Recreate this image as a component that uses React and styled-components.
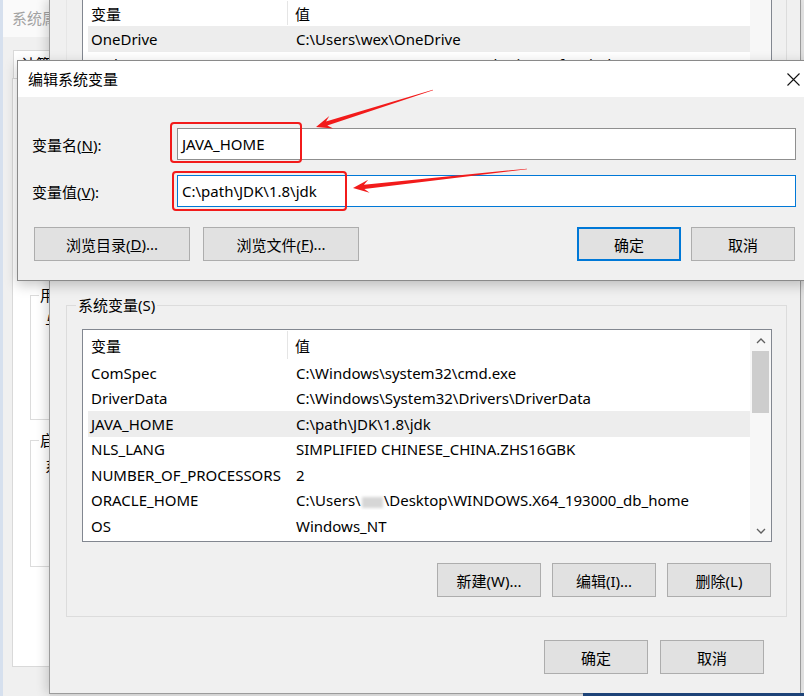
import React from "react";
import styled, { createGlobalStyle } from "styled-components";

const GlobalStyle = createGlobalStyle`
  html, body { margin: 0; padding: 0; }
  body {
    font-family: "Noto Sans", "Noto Sans CJK SC", sans-serif;
    font-size: 15px;
    color: #000;
  }
  * { box-sizing: border-box; }
`;

const userVars = [
  { name: "OneDrive", value: "C:\\Users\\wex\\OneDrive", selected: true },
  { name: "Path", value: "C:\\Users\\wex\\AppData\\Local\\Microsoft\\WindowsApps;" },
  { name: "TEMP", value: "C:\\Users\\wex\\AppData\\Local\\Temp" },
  { name: "TMP", value: "C:\\Users\\wex\\AppData\\Local\\Temp" },
];

const sysVars = [
  { name: "ComSpec", value: "C:\\Windows\\system32\\cmd.exe" },
  { name: "DriverData", value: "C:\\Windows\\System32\\Drivers\\DriverData" },
  { name: "JAVA_HOME", value: "C:\\path\\JDK\\1.8\\jdk", selected: true },
  { name: "NLS_LANG", value: "SIMPLIFIED CHINESE_CHINA.ZHS16GBK" },
  { name: "NUMBER_OF_PROCESSORS", value: "2" },
  { name: "ORACLE_HOME", value: ["C:\\Users\\", "\\Desktop\\WINDOWS.X64_193000_db_home"] },
  { name: "OS", value: "Windows_NT" },
];

// tapered annotation arrow, tail -> tip
const arrowPoints = (tx, ty, px, py) => {
  const dx = px - tx;
  const dy = py - ty;
  const len = Math.hypot(dx, dy);
  const ux = dx / len;
  const uy = dy / len;
  const nx = -uy;
  const ny = ux;
  const head = 16;
  const wing = 6.5;
  const neck = 2.1;
  const tail = 0.3;
  const hx = px - ux * head;
  const hy = py - uy * head;
  const bx = px - ux * head * 0.7;
  const by = py - uy * head * 0.7;
  return [
    [tx + nx * tail, ty + ny * tail],
    [bx + nx * neck, by + ny * neck],
    [hx + nx * wing, hy + ny * wing],
    [px, py],
    [hx - nx * wing, hy - ny * wing],
    [bx - nx * neck, by - ny * neck],
    [tx - nx * tail, ty - ny * tail],
  ]
    .map((p) => p.map((v) => v.toFixed(1)).join(","))
    .join(" ");
};

const Chevron = ({ up }) => (
  <svg width="10" height="6" viewBox="0 0 10 6">
    <path
      d={up ? "M1 5 L5 1 L9 5" : "M1 1 L5 5 L9 1"}
      fill="none"
      stroke="#606060"
      strokeWidth="1.3"
    />
  </svg>
);

const VarList = ({ rows, cut, height }) => (
  <ListBox $cut={cut} $height={height}>
    <ListContent>
      <ListHeader $cut={cut}>
        <HeaderCell $first>变量</HeaderCell>
        <HeaderCell>值</HeaderCell>
      </ListHeader>
      {rows.map((r) => (
        <Row key={r.name} $selected={r.selected}>
          <NameCell>{r.name}</NameCell>
          <ValueCell>
            {Array.isArray(r.value) ? (
              <>
                {r.value[0]}
                <Masked />
                {r.value[1]}
              </>
            ) : (
              r.value
            )}
          </ValueCell>
        </Row>
      ))}
    </ListContent>
    <ScrollBar>
      {!cut && (
        <ScrollArrow>
          <Chevron up />
        </ScrollArrow>
      )}
      {!cut && <ScrollThumb />}
      <ScrollTrack />
      {!cut && (
        <ScrollArrow>
          <Chevron />
        </ScrollArrow>
      )}
    </ScrollBar>
  </ListBox>
);

const App = () => {
  return (
    <>
      <GlobalStyle />
      <Desktop>
        {/* only the left sliver of the 系统属性 window shows */}
        <BackWindow>
          <BackTitle>系统属</BackTitle>
          <BackTabs>
            <BackTab>计算</BackTab>
          </BackTabs>
          <BackPanel>
            <BackGroup $height={180} />
            <BackGroup $height={135} $gap={15}>
              <BackLegend>用户</BackLegend>
              <BackText>与登</BackText>
            </BackGroup>
            <BackGroup $height={137} $gap={10}>
              <BackLegend>启动</BackLegend>
              <BackText>系统</BackText>
            </BackGroup>
          </BackPanel>
        </BackWindow>

        <EnvWindow>
          <UserGroup>
            <VarList rows={userVars} cut height={262} />
          </UserGroup>
          <SysGroup>
            <GroupLegend>系统变量(S)</GroupLegend>
            <VarList rows={sysVars} height={213} />
            <ButtonRow>
              <Button>新建(W)...</Button>
              <Button>编辑(I)...</Button>
              <Button>删除(L)</Button>
            </ButtonRow>
          </SysGroup>
          <FooterRow>
            <Button>确定</Button>
            <Button>取消</Button>
          </FooterRow>
        </EnvWindow>

        <Dialog>
          <TitleBar>
            <Title>编辑系统变量</Title>
            <CloseButton>
              <svg width="13" height="13" viewBox="0 0 13 13">
                <path d="M0.5 0.5 L12.5 12.5 M12.5 0.5 L0.5 12.5" stroke="#111" strokeWidth="1.1" />
              </svg>
            </CloseButton>
          </TitleBar>
          <DialogBody>
            <FieldGrid>
              <FieldLabel>
                变量名(<u>N</u>):
              </FieldLabel>
              <TextInput>JAVA_HOME</TextInput>
              <FieldLabel>
                变量值(<u>V</u>):
              </FieldLabel>
              <TextInput $focused>C:\path\JDK\1.8\jdk</TextInput>
            </FieldGrid>
            <DialogActions>
              <ButtonGroup $gap={13}>
                <Button $wide>
                  浏览目录(<u>D</u>)...
                </Button>
                <Button $wide>
                  浏览文件(<u>F</u>)...
                </Button>
              </ButtonGroup>
              <ButtonGroup $gap={10}>
                <Button $default>确定</Button>
                <Button>取消</Button>
              </ButtonGroup>
            </DialogActions>
          </DialogBody>
        </Dialog>

        <TaskStrip />

        <Annotations viewBox="0 0 804 696">
          <rect x="171" y="123" width="130" height="39" rx="3" fill="none" stroke="#f21b1b" strokeWidth="2" />
          <rect x="173" y="172" width="173" height="38" rx="3" fill="none" stroke="#f21b1b" strokeWidth="2" />
          <polygon points={arrowPoints(433, 90, 316, 127)} fill="#f21b1b" />
          <polygon points={arrowPoints(527, 169, 353, 188)} fill="#f21b1b" />
        </Annotations>
      </Desktop>
    </>
  );
};

const Desktop = styled.div`
  position: relative;
  width: 804px;
  height: 696px;
  overflow: hidden;
  background: #e6e6e6;
`;

/* ---------- back window (系统属性) ---------- */

const BackWindow = styled.div`
  position: absolute;
  left: 0;
  top: 0;
  width: 50px;
  height: 696px;
  overflow: hidden;
  background: #f0f0f0;
  border-left: 3px solid #d6e0ee;
  display: flex;
  flex-direction: column;
`;

const BackTitle = styled.div`
  height: 37px;
  background: #fafafa;
  color: #a3a3a3;
  font-size: 15px;
  line-height: 37px;
  padding-left: 9px;
  white-space: nowrap;
  overflow: hidden;
`;

const BackTabs = styled.div`
  display: flex;
  padding: 13px 0 0 10px;
`;

const BackTab = styled.div`
  flex: 1;
  height: 28px;
  padding: 2px 0 0 7px;
  border: 1px solid #d9d9d9;
  border-bottom: none;
  border-right: none;
  background: #fff;
  font-size: 15px;
  white-space: nowrap;
  overflow: hidden;
`;

const BackPanel = styled.div`
  margin-left: 9px;
  height: 589px;
  background: #fff;
  border: 1px solid #d9d9d9;
  border-right: none;
  padding: 11px 0 0 17px;
`;

const BackGroup = styled.fieldset`
  margin: ${(p) => p.$gap || 0}px 0 0;
  min-width: 0;
  height: ${(p) => p.$height}px;
  padding: 6px 0 0 14px;
  border: 1px solid #dcdcdc;
  border-right: none;
`;

const BackLegend = styled.legend`
  margin-left: -6px;
  padding: 0 1px;
  font-size: 15px;
  line-height: 20px;
  white-space: nowrap;
`;

const BackText = styled.div`
  font-size: 15px;
  line-height: 20px;
  white-space: nowrap;
  overflow: hidden;
`;

/* ---------- environment variables window ---------- */

const EnvWindow = styled.div`
  position: absolute;
  left: 49px;
  top: 0;
  width: 752px;
  height: 694px;
  background: #f0f0f0;
  border: 1px solid #9b9b9b;
  border-top: none;
  box-shadow: -3px 0 10px rgba(0, 0, 0, 0.16);
  padding: 0 13px 0 16px;
  display: flex;
  flex-direction: column;
`;

const UserGroup = styled.div`
  height: 281px;
  padding: 0 14px 0 15px;
  border-right: 1px solid #dcdcdc;
  border-left: 1px solid #e6e6e6;
`;

const SysGroup = styled.fieldset`
  margin: 14px 0 0;
  padding: 14px 14px 19px 15px;
  border: 1px solid #dcdcdc;
  min-width: 0;
`;

const GroupLegend = styled.legend`
  margin-left: -6px;
  padding: 0 2px;
  font-size: 15px;
  line-height: 20px;
`;

const ListBox = styled.div`
  height: ${(p) => p.$height}px;
  background: #fff;
  border: 1px solid #828790;
  border-top: ${(p) => (p.$cut ? "none" : "1px solid #828790")};
  display: flex;
  overflow: hidden;
`;

const ListContent = styled.div`
  flex: 1;
  min-width: 0;
  padding-left: 5px;
`;

const ListHeader = styled.div`
  height: ${(p) => (p.$cut ? 26 : 30)}px;
  display: grid;
  grid-template-columns: 200px 1fr;
`;

const HeaderCell = styled.div`
  display: flex;
  align-items: center;
  padding-left: ${(p) => (p.$first ? 3 : 7)}px;
  border-right: ${(p) => (p.$first ? "1px solid #e5e5e5" : "none")};
  margin: 1px 0;
`;

const Row = styled.div`
  height: 25.5px;
  display: grid;
  grid-template-columns: 200px 1fr;
  align-items: center;
  background: ${(p) => (p.$selected ? "#ededed" : "transparent")};
  white-space: nowrap;
`;

const NameCell = styled.div`
  padding-left: 3px;
  overflow: hidden;
`;

const ValueCell = styled.div`
  padding-left: 8px;
  overflow: hidden;
`;

const Masked = styled.span`
  display: inline-block;
  width: 21px;
  height: 11px;
  margin: 0 1px;
  background: #d6d6d6;
  filter: blur(1.5px);
  vertical-align: middle;
`;

const ScrollBar = styled.div`
  width: 21px;
  background: #f7f7f7;
  display: flex;
  flex-direction: column;
`;

const ScrollArrow = styled.div`
  height: 21px;
  display: flex;
  align-items: center;
  justify-content: center;
`;

const ScrollThumb = styled.div`
  height: 62px;
  margin: 0 2px;
  background: #cdcdcd;
`;

const ScrollTrack = styled.div`
  flex: 1;
`;

const ButtonRow = styled.div`
  display: flex;
  justify-content: flex-end;
  gap: 11px;
  margin-top: 21px;
  padding-right: 1px;
`;

const FooterRow = styled.div`
  display: flex;
  justify-content: flex-end;
  gap: 12px;
  margin-top: 23px;
  padding-right: 23px;
`;

const Button = styled.div`
  width: ${(p) => (p.$wide ? 156 : 104)}px;
  height: 34px;
  display: flex;
  align-items: center;
  justify-content: center;
  background: #e1e1e1;
  border: ${(p) => (p.$default ? "2px solid #0078d7" : "1px solid #adadad")};
  font-size: 15px;
  white-space: nowrap;
`;

/* ---------- edit dialog ---------- */

const Dialog = styled.div`
  position: absolute;
  left: 17px;
  top: 60px;
  width: 792px;
  background: #f0f0f0;
  border: 1px solid #8a8a8a;
  box-shadow: 0 4px 12px rgba(0, 0, 0, 0.22);
`;

const TitleBar = styled.div`
  height: 36px;
  background: #fff;
  display: flex;
  align-items: center;
  justify-content: space-between;
  padding-left: 10px;
`;

const Title = styled.div`
  font-size: 15px;
  margin-top: -2px;
`;

const CloseButton = styled.div`
  width: 30px;
  height: 36px;
  display: flex;
  align-items: center;
  justify-content: center;
`;

const DialogBody = styled.div`
  padding: 31px 12px 19px 14px;
`;

const FieldGrid = styled.div`
  display: grid;
  grid-template-columns: 145px 1fr;
  row-gap: 15px;
  align-items: center;
`;

const FieldLabel = styled.div`
  font-size: 15px;
  white-space: nowrap;
`;

const TextInput = styled.div`
  height: 32px;
  display: flex;
  align-items: center;
  padding-left: 4px;
  background: #fff;
  border: 1px solid ${(p) => (p.$focused ? "#0078d7" : "#8f8f8f")};
  font-size: 15px;
  white-space: nowrap;
`;

const DialogActions = styled.div`
  display: flex;
  justify-content: space-between;
  margin-top: 20px;
  padding: 0 1px 0 2px;
`;

const ButtonGroup = styled.div`
  display: flex;
  gap: ${(p) => p.$gap}px;
`;

const TaskStrip = styled.div`
  position: absolute;
  left: 583px;
  right: 0;
  bottom: 0;
  height: 3px;
  background: #1d4378;
`;

const Annotations = styled.svg`
  position: absolute;
  left: 0;
  top: 0;
  width: 804px;
  height: 696px;
  pointer-events: none;
`;

export default App;
